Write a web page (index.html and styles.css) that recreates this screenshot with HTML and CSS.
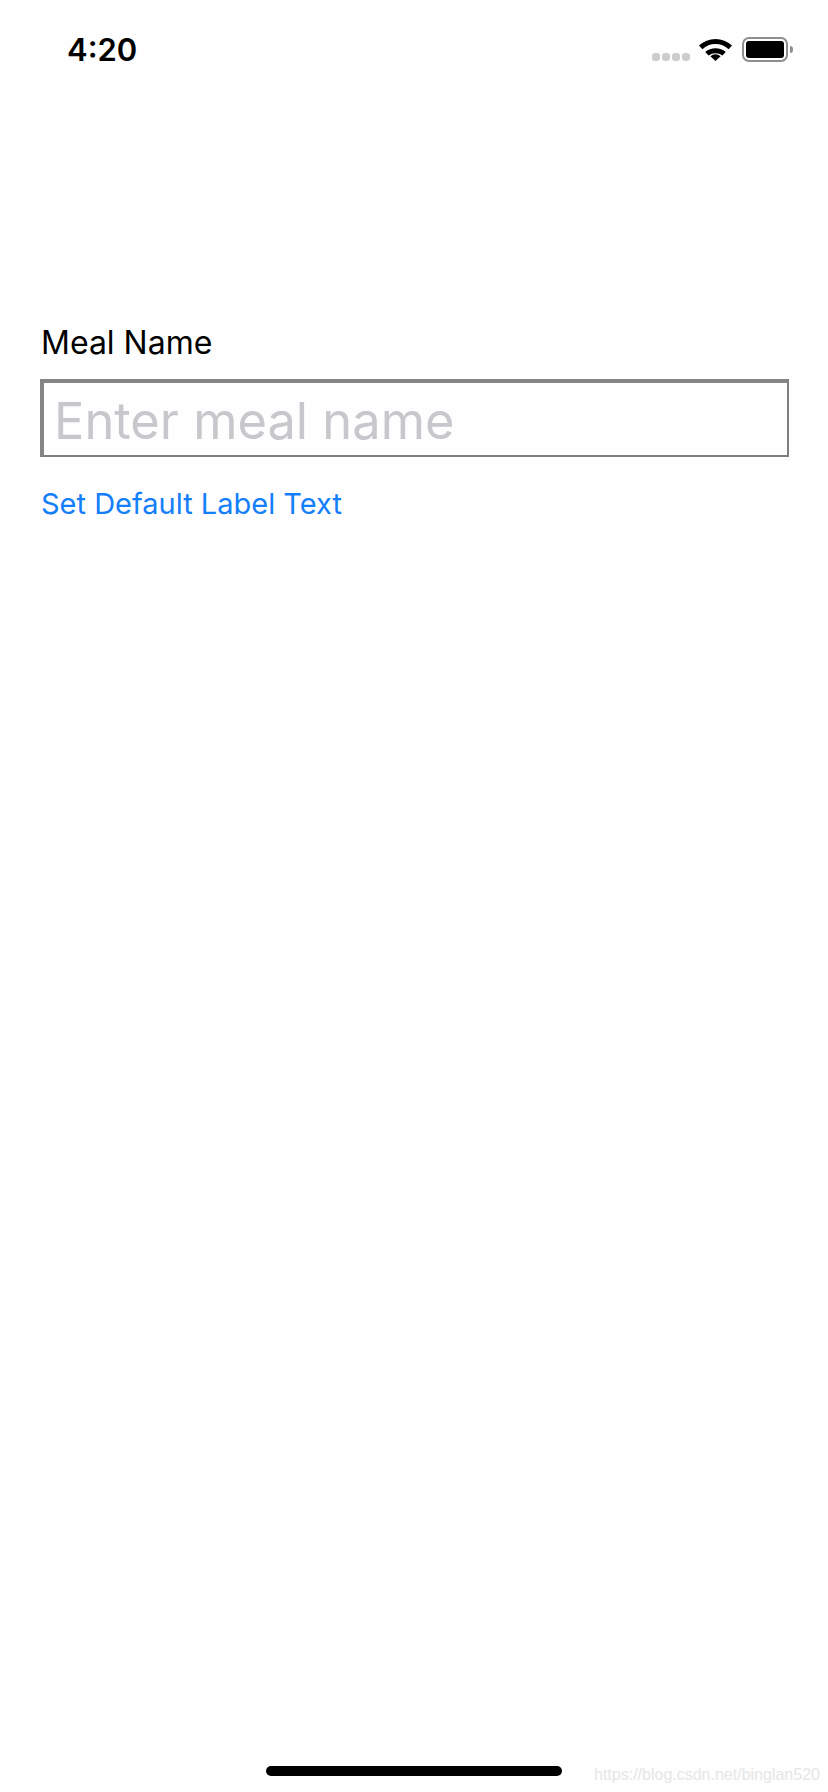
FILE: index.html
```html
<!DOCTYPE html>
<html lang="en">
<head>
    <meta charset="UTF-8">
    <meta name="viewport" content="width=device-width, initial-scale=1.0">
    <title>Meal Name</title>
    <link rel="stylesheet" href="styles.css">
</head>
<body>
    <div class="status-bar">
        <span class="time">4:20</span>
        <div class="status-icons">
            <div class="signal"><i></i><i></i><i></i><i></i></div>
            <svg class="wifi" width="33" height="24" viewBox="0 0 33 24">
                <path d="M0 8.6 A24 24 0 0 1 33 8.6 L29.6 12.3 A19 19 0 0 0 3.4 12.3 Z" fill="#000"/>
                <path d="M6.2 15 A16 16 0 0 1 26.8 15 L23.4 18.6 A11 11 0 0 0 9.6 18.6 Z" fill="#000"/>
                <path d="M11.4 19.2 A8 8 0 0 1 21.6 19.2 L16.5 24 Z" fill="#000"/>
            </svg>
            <div class="battery"><div class="battery-level"></div></div>
            <div class="battery-nub"></div>
        </div>
    </div>

    <main class="form">
        <label class="form-label">Meal Name</label>
        <input class="name-input" type="text" placeholder="Enter meal name">
        <a class="default-link" href="#">Set Default Label Text</a>
    </main>

    <div class="home-row">
        <div class="home-bar"></div>
    </div>
    <span class="watermark">https://blog.csdn.net/binglan520</span>
</body>
</html>
```

FILE: styles.css
```css
* {
    box-sizing: border-box;
}
body {
    margin: 0;
    width: 828px;
    height: 1792px;
    position: relative;
    overflow: hidden;
    display: flex;
    flex-direction: column;
    background: #fefefe;
    font-family: Inter, "Liberation Sans", sans-serif;
    color: #000;
}
.status-bar {
    height: 88px;
    padding: 37px 35px 0 67px;
    display: flex;
    justify-content: space-between;
    align-items: flex-start;
}
.time {
    font-size: 31px;
    font-weight: 600;
    line-height: 25px;
}
.status-icons {
    display: flex;
    align-items: flex-start;
}
.signal {
    display: flex;
    gap: 2px;
    margin-top: 16px;
    margin-right: 9px;
}
.signal i {
    width: 8px;
    height: 8px;
    border-radius: 3px;
    background: #cdcdcd;
}
.wifi {
    display: block;
    margin-right: 10px;
}
.battery {
    width: 46px;
    height: 25px;
    padding: 2px;
    border: 2px solid #8e8e8e;
    border-radius: 7px;
}
.battery-level {
    height: 100%;
    background: #000;
    border-radius: 3px;
}
.battery-nub {
    width: 3px;
    height: 7px;
    margin: 9px 0 0 2px;
    background: #8e8e8e;
    border-radius: 0 3px 3px 0;
}
.form {
    flex: 1;
    padding: 237px 40px 0;
    display: flex;
    flex-direction: column;
    align-items: flex-start;
}
.form-label {
    margin-left: 1px;
    font-size: 32px;
    line-height: 36px;
}
.name-input {
    width: 749px;
    height: 78px;
    margin-top: 18px;
    padding: 2px 0 0 10px;
    border-style: solid;
    border-width: 4px 2px 2px 4px;
    border-color: #858585 #7f7f7f #7f7f7f #858585;
    border-radius: 0;
    outline: none;
    background: #fefefe;
    font-family: inherit;
    font-size: 50.6px;
}
.name-input::placeholder {
    color: #c7c7cc;
    opacity: 1;
}
.default-link {
    margin: 30px 0 0 1px;
    font-size: 29px;
    line-height: 34px;
    color: #147efb;
    text-decoration: none;
}
.home-row {
    height: 26px;
    padding-left: 266px;
}
.home-bar {
    width: 296px;
    height: 10px;
    border-radius: 5px;
    background: #000;
}
/* stamped over the screenshot */
.watermark {
    position: absolute;
    left: 594px;
    top: 1764px;
    font-family: "Liberation Sans", sans-serif;
    font-size: 16px;
    line-height: 21px;
    color: #e6e6e6;
}
```
